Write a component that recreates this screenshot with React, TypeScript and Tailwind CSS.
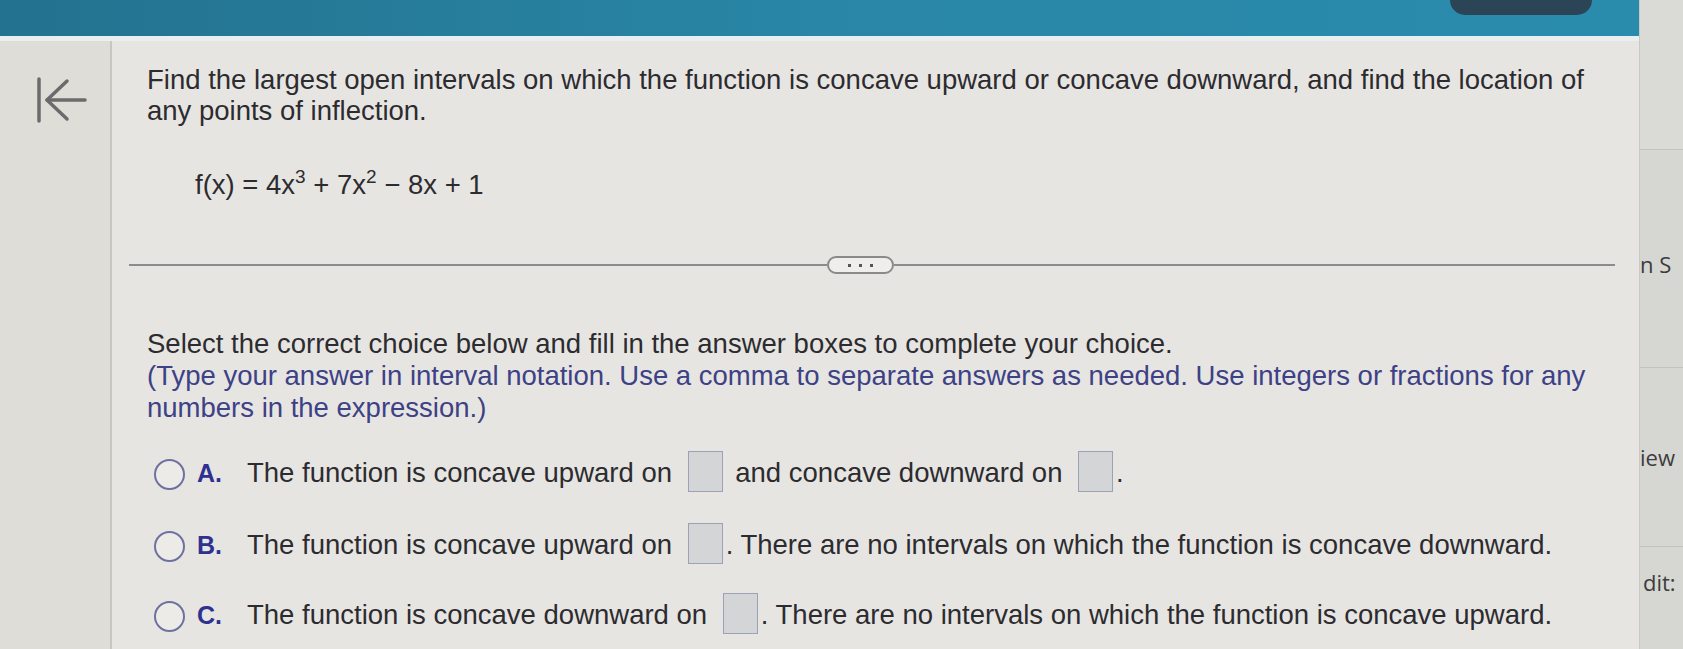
import React from 'react';

function AnswerBox({ className = '' }: { className?: string }) {
  return (
    <span
      className={`inline-block w-[35px] h-[41px] align-[-10px] bg-[#d4d5d7] border-[1.5px] border-[#9ca1b6] ${className}`}
    />
  );
}

function Choice({ letter, children, className = '' }: { letter: string; children: React.ReactNode; className?: string }) {
  return (
    <div className={`leading-[34px] whitespace-nowrap ${className}`}>
      <span className="inline-block align-middle ml-[7px] mr-[12px] w-[31px] h-[31px] rounded-full border-[2.5px] border-[#6e71a0] bg-[#ecebe7]" />
      <span className="inline-block w-[50px] text-[25px] font-bold text-[#2e3190]">{letter}.</span>
      <span>{children}</span>
    </div>
  );
}

export default function App() {
  return (
    <div className="w-[1683px] h-[649px] overflow-hidden flex bg-[#d7d7d4] font-['Liberation_Sans',Arial,sans-serif]">
      <div className="w-[1639px] flex flex-col shrink-0">
        <header className="relative h-[36px] bg-gradient-to-r from-[#23728f] via-[#2986a6] to-[#2a8cad]">
          <div className="absolute top-0 left-[1450px] w-[142px] h-[15px] rounded-b-[18px] bg-[#2b4557]" />
        </header>
        <div className="flex flex-1 border-t-[5px] border-[#e9eef0]">
          <aside className="w-[112px] shrink-0 bg-[#dfddd8] border-r-2 border-[#c7c6c2] pt-[36px] pl-[35px]">
            <svg width="52" height="46" viewBox="0 0 52 46" fill="none" stroke="#6b6b6d" strokeWidth="3.5" strokeLinecap="round" strokeLinejoin="round">
              <line x1="4" y1="2" x2="4" y2="44" />
              <line x1="12" y1="23" x2="50" y2="23" />
              <polyline points="32,4 12,23 32,42" />
            </svg>
          </aside>
          <main className="flex-1 bg-[#e7e5e1] pl-[35px] pt-[23px] text-[27.5px] text-[#2c2c30]">
            <p className="leading-[31px] whitespace-nowrap">
              Find the largest open intervals on which the function is concave upward or concave downward, and find the location of
              <br />
              any points of inflection.
            </p>
            <p className="mt-[43px] ml-[48px] leading-[31px] whitespace-nowrap">
              f(x) = 4x<sup className="text-[19px] top-[-11px]">3</sup> + 7x<sup className="text-[19px] top-[-11px]">2</sup> − 8x + 1
            </p>
            <div className="mt-[56px] -ml-[18px] w-[1486px] flex items-center">
              <div className="w-[698px] h-[2px] bg-[#8c8c8c]" />
              <div className="w-[67px] h-[18px] shrink-0 rounded-full border-2 border-[#8a8a8a] bg-[#efeeeb] flex items-center justify-center gap-[8px]">
                <span className="w-[3px] h-[3px] bg-[#555]" />
                <span className="w-[3px] h-[3px] bg-[#555]" />
                <span className="w-[3px] h-[3px] bg-[#555]" />
              </div>
              <div className="flex-1 h-[2px] bg-[#8c8c8c]" />
            </div>
            <p className="mt-[54px] leading-[32px] whitespace-nowrap">
              Select the correct choice below and fill in the answer boxes to complete your choice.
              <br />
              <span className="text-[#3d4186]">
                (Type your answer in interval notation. Use a comma to separate answers as needed. Use integers or fractions for any
                <br />
                numbers in the expression.)
              </span>
            </p>
            <Choice letter="A" className="mt-[27px]">
              The function is concave upward on <AnswerBox className="ml-[8px] mr-[5px]" /> and concave downward on <AnswerBox className="ml-[8px] mr-[3px]" />.
            </Choice>
            <Choice letter="B" className="mt-[31px]">
              The function is concave upward on <AnswerBox className="ml-[8px] mr-[3px]" />. There are no intervals on which the function is concave downward.
            </Choice>
            <Choice letter="C" className="mt-[29px]">
              The function is concave downward on <AnswerBox className="ml-[8px] mr-[3px]" />. There are no intervals on which the function is concave upward.
            </Choice>
          </main>
        </div>
      </div>
      <aside className="flex-1 overflow-hidden flex flex-col bg-[#d6d6d3] border-l border-[#c9c9c6] font-['Open_Sans',sans-serif] text-[22px] text-[#3c3c3c] whitespace-nowrap">
        <div className="h-[150px] shrink-0 border-b border-[#c2c2bf] bg-[#dadad7]" />
        <div className="h-[218px] shrink-0 border-b border-[#c2c2bf] pt-[99px] leading-[30px]">n S</div>
        <div className="h-[179px] shrink-0 border-b border-[#c2c2bf] pt-[74px] leading-[30px]">iew</div>
        <div className="pt-[20px] pl-[3px] leading-[30px]">dit:</div>
      </aside>
    </div>
  );
}
